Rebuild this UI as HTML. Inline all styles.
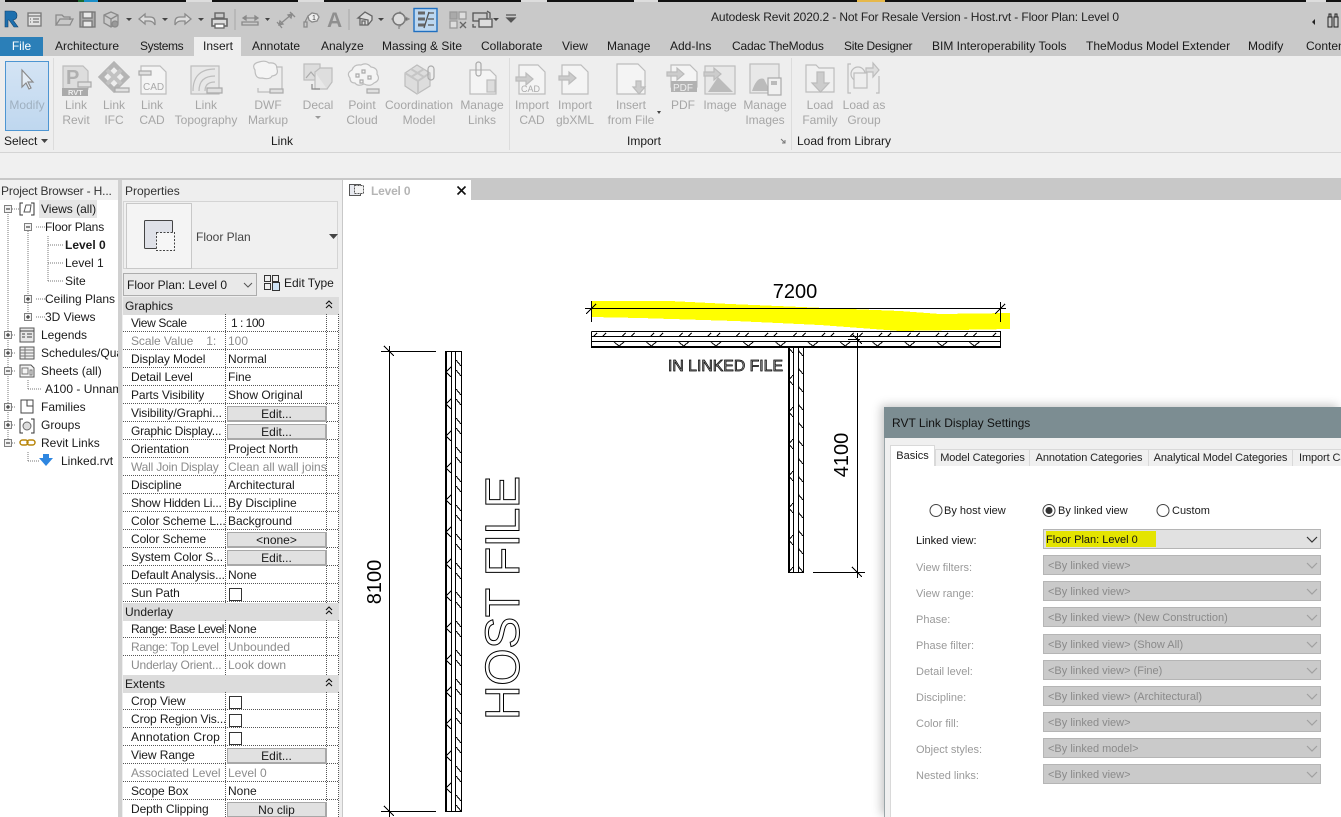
<!DOCTYPE html>
<html><head><meta charset="utf-8"><title>Revit</title>
<style>
html,body{margin:0;padding:0;width:1341px;height:817px;overflow:hidden;background:#fff}
body{position:relative;font:12px/16px "Liberation Sans",sans-serif;color:#1a1a1a}
.a,.t,.c,.g,.gc,.b,.bb,.v,.vg,.rk,.dl,.cb{position:absolute;white-space:nowrap}
.c,.gc{transform:translateX(-50%);text-align:center}
.g,.gc{color:#a6a6a6}
svg{position:absolute;overflow:visible}
.rk{left:131px;width:95px;overflow:hidden;letter-spacing:-.08px}
.v{left:228px;width:98px;overflow:hidden}
.grey{color:#8c8c8c}
.bb{left:227px;width:97px;height:13px;margin-top:1px;background:#e1e1e1;border:1px solid #a8a8a8;border-right-width:2px;border-bottom-width:2px;text-align:center;line-height:14px;box-sizing:content-box}
.ck{position:absolute;left:229px;width:11px;height:11px;margin-top:1px;border:1px solid #333;background:#fff}
.hd{position:absolute;left:123px;width:216px;height:18px;background:#dcdcdc;line-height:18px;text-indent:2px}
.dl{left:916px;color:#9a9a9a;font-size:11px;margin-top:1px}
.cb{left:1043px;width:276px;height:18px;background:#cacaca;border:1px solid #b5b5b5;color:#8a8a8a;line-height:21px;text-indent:4px;font-size:11px}
.tab{position:absolute;top:449px;height:16px;background:#f0f0f0;border:1px solid #d9d9d9;border-bottom:0;line-height:17px;text-align:center;font-size:11px;letter-spacing:-.1px;color:#222;box-sizing:content-box;white-space:nowrap;overflow:hidden}
</style></head><body>

<!-- top strip -->
<div class="a" style="left:0;top:0;width:1341px;height:2px;background:#111"></div>
<div class="a" style="left:0;top:0;width:5px;height:2px;background:#ccc"></div>
<div class="a" style="left:78px;top:0;width:6px;height:2px;background:#1a6a30"></div>
<div class="a" style="left:84px;top:0;width:14px;height:2px;background:#1a8fc8"></div>
<div class="a" style="left:186px;top:0;width:26px;height:2px;background:#ddd"></div>
<div class="a" style="left:298px;top:0;width:26px;height:2px;background:#ddd"></div>
<div class="a" style="left:521px;top:0;width:26px;height:2px;background:#ddd"></div>
<div class="a" style="left:634px;top:0;width:24px;height:2px;background:#ddd"></div>
<div class="a" style="left:857px;top:0;width:28px;height:2px;background:#e6b84a"></div>
<div class="a" style="left:1306px;top:0;width:20px;height:2px;background:#ddd"></div>

<!-- title bar -->
<div class="a" style="left:0;top:2px;width:1341px;height:34px;background:#c9c9c9"></div>
<div class="a" style="left:0;top:36px;width:1341px;height:20px;background:#c9c9c9"></div>
<div class="c" style="left:915px;top:9px;color:#222;font-size:12px;letter-spacing:-.13px">Autodesk Revit 2020.2 - Not For Resale Version - Host.rvt - Floor Plan: Level 0</div>

<!-- quick access -->
<svg style="left:0;top:0" width="540" height="36" viewBox="0 0 540 36" fill="none" stroke="#8a8a8a" stroke-width="1.3">
 <path d="M5 27V11h7q5 0 5 4.500q0 4-4 4.500l5 7h-4l-5-7h-1v7z" fill="#1d6fae" stroke="#12406a" stroke-width="0.6"/>
 <rect x="28" y="13" width="13" height="13" fill="#e2e2e2" stroke="#777"/><path d="M28 16h13M33 19h6M33 22h6M30 19h1M30 22h1" stroke="#777"/>
 <path d="M56 25V15h6l2 2h6v3M56 25h14l3-6H60l-4 6z"/>
 <rect x="80" y="12" width="15" height="15" fill="#aaa" stroke="#777"/><rect x="83" y="12" width="9" height="6" fill="#e8e8e8" stroke="#777"/><rect x="83" y="21" width="9" height="6" fill="#e8e8e8" stroke="#777"/>
 <path d="M104 15l7-3 7 3v8l-7 4-7-4zM104 15l7 4 7-4M111 19v8"/><circle cx="115" cy="24" r="3" fill="#999"/>
 <path d="M126 18h6l-3 3zM162 18h6l-3 3zM198 18h6l-3 3zM265 18h5l-2.500 3z" fill="#444" stroke="none"/>
 <path d="M139 19l6-5v3h5q5 0 5 5v3q-2-4-6-4h-4v3z" fill="#ddd"/>
 <path d="M191 19l-6-5v3h-5q-5 0-5 5v3q2-4 6-4h4v3z" fill="#ddd"/>
 <rect x="212" y="19" width="15" height="7" fill="#ddd" stroke="#666" stroke-width="1.600"/><rect x="215" y="13" width="9" height="5" stroke="#666" stroke-width="1.400"/><rect x="215" y="24" width="9" height="4" fill="#fff" stroke="#666"/>
 <path d="M235 9v21" stroke="#b0b0b0"/>
 <path d="M243 18h15M243 18l3-2v4zM258 18l-3-2v4zM242 22h16v3h-16z"/>
 <path d="M279 25l13-11M277 22l5 6M290 12l5 5M279 25l4-1-3-3zM292 14l-4 1 3 3z"/>
 <path d="M304 27v-5h3v5zM305 22l3-6"/><path d="M308 16l4-3 5 1 2 3-2 4-5 1-3-2z" fill="#eee"/><text x="312" y="20" font-size="7" fill="#444" stroke="none" font-family="Liberation Sans">1</text>
 <text x="327" y="27" font-family="Liberation Sans" font-weight="bold" font-size="21" fill="#8f8f8f" stroke="none">A</text>
 <path d="M349 9v21" stroke="#b0b0b0"/>
 <path d="M358 18l7-6 7 4v4l-4 5h-8v-7zM358 18l10 2v5M362 25v-4h3v4" fill="#ddd" stroke="#666"/>
 <path d="M378 18h6l-3 3zM493 18h6l-3 3z" fill="#444" stroke="none"/>
 <path d="M392 19l8-7 6 7-6 7z" fill="#ddd"/><circle cx="399" cy="19" r="6" fill="#ddd" stroke="#777" stroke-width="1.500"/><path d="M405 17l4 2-4 2zM399 25v4" fill="#555"/>
 <rect x="414" y="8.500" width="23" height="23" fill="#bcd7f0" stroke="#1f6fc0" stroke-width="1.400"/>
 <path d="M418 13h7M418 19h7M418 25h7" stroke="#666" stroke-width="3"/><path d="M428 13h6M428 19h6M428 25h6M429 12l-5 16" stroke="#555"/>
 <rect x="450" y="12" width="7" height="7" fill="#aaa" stroke="#999"/><rect x="459" y="12" width="7" height="7" fill="#ddd" stroke="#999"/><rect x="450" y="21" width="7" height="7" fill="#ddd" stroke="#999"/><path d="M460 22l6 6M466 22l-6 6" stroke="#666"/>
 <rect x="473" y="13" width="14" height="8" stroke="#555"/><rect x="479" y="19" width="13" height="8" fill="#ddd" stroke="#555"/><path d="M487 11l3 2v5M473 24v3h3" stroke="#555"/>
 <path d="M506 15h10M507 18h8l-4 4z" fill="#555" stroke="#555"/>
</svg>
<svg style="left:1300px;top:8px" width="41" height="22" fill="none" stroke="#222"><path d="M15 11l-3 3 3 3z" fill="#222" stroke="none"/><path d="M28 9h4v10h-4zM34 9h4v10h-4zM29 9V6h2v3M35 9V6h2v3"/></svg>

<!-- tabs -->
<div class="a" style="left:0;top:37px;width:43px;height:19px;background:#2b7fb8;color:#fff;text-align:center;line-height:19px">File</div>
<div class="a" style="left:194px;top:37px;width:47px;height:19px;background:#eeeeee"></div>
<div class="t" style="left:55px;top:38px">Architecture</div>
<div class="t" style="left:140px;top:38px;letter-spacing:-.4px">Systems</div>
<div class="t" style="left:203px;top:38px">Insert</div>
<div class="t" style="left:252px;top:38px">Annotate</div>
<div class="t" style="left:321px;top:38px">Analyze</div>
<div class="t" style="left:382px;top:38px">Massing &amp; Site</div>
<div class="t" style="left:481px;top:38px">Collaborate</div>
<div class="t" style="left:562px;top:38px">View</div>
<div class="t" style="left:607px;top:38px">Manage</div>
<div class="t" style="left:670px;top:38px">Add-Ins</div>
<div class="t" style="left:732px;top:38px;letter-spacing:-.2px">Cadac TheModus</div>
<div class="t" style="left:844px;top:38px;letter-spacing:-.3px">Site Designer</div>
<div class="t" style="left:932px;top:38px">BIM Interoperability Tools</div>
<div class="t" style="left:1086px;top:38px">TheModus Model Extender</div>
<div class="t" style="left:1248px;top:38px">Modify</div>
<div class="t" style="left:1306px;top:38px">Content</div>

<!-- ribbon -->
<div class="a" style="left:0;top:56px;width:1341px;height:96px;background:#eeeeee;border-bottom:1px solid #d4d4d4"></div>
<div class="a" style="left:0;top:153px;width:1341px;height:25px;background:#f0f0f0"></div>
<div class="a" style="left:0;top:178px;width:1341px;height:2px;background:#c8c8c8"></div>
<div class="a" style="left:5px;top:61px;width:42px;height:68px;background:linear-gradient(#d4e4f4,#bfd7ef);border:1px solid #4d95d2"></div>
<div class="a" style="left:53px;top:58px;width:1px;height:92px;background:#dcdcdc"></div>
<div class="a" style="left:509px;top:58px;width:1px;height:92px;background:#dcdcdc"></div>
<div class="a" style="left:791px;top:58px;width:1px;height:92px;background:#dcdcdc"></div>

<svg style="left:0;top:56px" width="900" height="60" fill="none" stroke="#bdbdbd" stroke-width="1.200">
 <path d="M22 14v17l4-4 3 6 2-1-3-6h5z" fill="#e4edf6" stroke="#8a8a8a"/>
 <path d="M63 10h20l5 5v18H63z" fill="#ddd"/><rect x="62" y="32" width="26" height="8" fill="#aaa" stroke="none"/><text x="66" y="28" font-family="Liberation Sans" font-weight="bold" font-size="20" fill="#b0b0b0" stroke="none">P</text><text x="68" y="39" font-family="Liberation Sans" font-weight="bold" font-size="7.500" fill="#eee" stroke="none">RVT</text>
 <path d="M78 26h13v5H78z" fill="#e0e0e0" stroke="#aaa"/>
 <path d="M101 21l13-13 13 13-13 13z" stroke="#b4b4b4" stroke-width="4.500"/><path d="M107 14l14 14M121 14l-14 14" stroke="#c2c2c2" stroke-width="4"/>
 <path d="M115 32h14v4h-14z" fill="#e0e0e0" stroke="#aaa"/>
 <path d="M141 10h19l6 6v22h-25z" fill="#f4f4f4"/><text x="143" y="34" font-family="Liberation Sans" font-size="10" fill="#aaa" stroke="none">CAD</text><path d="M139 15h12v4h-12z" fill="#e0e0e0" stroke="#aaa"/>
 <rect x="191" y="10" width="28" height="28" fill="#e8e8e8"/><path d="M193 35q0-22 22-22M199 35q0-15 16-15M205 35q0-9 10-9"/><path d="M207 32h15v5h-15z" fill="#e0e0e0" stroke="#aaa"/>
 <path d="M255 14q-4-6 4-8 6-2 10 1 8-1 8 6 2 6-5 7-2 4-10 2-7 1-7-8z" fill="#f4f4f4"/><path d="M276 11h6v25h-24v-4"/><path d="M270 33h13v4h-13z" fill="#e0e0e0" stroke="#aaa"/>
 <rect x="304" y="8" width="16" height="16" fill="#ddd"/><path d="M306 22l5-6 5 6" stroke="#aaa"/><path d="M315 16h12v17h-12z" fill="#e8e8e8"/><path d="M315 16l5-4h12v14l-5 7" fill="#dedede"/><path d="M312 28v5h8" stroke="#888"/>
 <path d="M350 22q-4-5 2-8 2-6 9-5 6-3 10 2 7 1 6 7 4 6-3 9-4 4-10 1-6 3-9-1-5 0-5-5z" fill="#f4f4f4"/><path d="M356 18h3v3h-3zM362 14h3v3h-3zM368 20h3v3h-3zM360 24h3v3h-3z" stroke="#aaa"/><path d="M367 33h12v4h-12z" fill="#e0e0e0" stroke="#aaa"/>
 <path d="M405 17l12-8 13 8v13l-13 8-12-8z" fill="#ddd"/><path d="M405 17l13 8 12-8M418 25v13M411 13l13 8M411 21l13-8" stroke="#c6c6c6" stroke-width="2"/><rect x="428" y="10" width="6" height="14" rx="3" stroke="#aaa"/>
 <path d="M470 14h20l6 6v18h-26z" fill="#f4f4f4"/><rect x="476" y="6" width="5" height="14" rx="2.500" stroke="#aaa"/><rect x="487" y="24" width="8" height="12" fill="#ddd"/>
 <path d="M519 9h19l7 7v22h-26z" fill="#f4f4f4"/><path d="M516 21h10v-4l7 6-7 6v-4h-10z" fill="#ccc" stroke="#bbb"/><text x="521" y="36" font-family="Liberation Sans" font-size="9" fill="#aaa" stroke="none">CAD</text>
 <path d="M562 9h19l7 7v22h-26z" fill="#f4f4f4"/><path d="M559 20h10v-4l7 6-7 6v-4h-10z" fill="#ccc" stroke="#bbb"/>
 <path d="M617 8h21l7 7v23h-28z" fill="#f4f4f4"/><path d="M636 25h5v6h4l-6 7-6-7h3z" fill="#ccc" stroke="#bbb"/>
 <path d="M671 9h19l7 7v15h-26z" fill="#f4f4f4"/><rect x="671" y="25" width="26" height="11" fill="#b2b2b2" stroke="none"/><text x="673" y="35" font-family="Liberation Sans" font-size="10" fill="#eee" stroke="none">PDF</text><path d="M667 16h10v-4l7 6-7 6v-4h-10z" fill="#ccc" stroke="#bbb"/>
 <rect x="705" y="10" width="30" height="28" fill="#e8e8e8"/><path d="M708 36l10-15 15 15z" fill="#bbb" stroke="none"/><path d="M704 16h10v-4l7 6-7 6v-4h-10z" fill="#ccc" stroke="#bbb"/>
 <rect x="750" y="8" width="29" height="29" fill="#e8e8e8"/><path d="M752 35q5-15 12-12l6 12z" fill="#bbb" stroke="none"/><rect x="768" y="22" width="13" height="17" fill="#f0f0f0" stroke="#aaa"/><rect x="771" y="25" width="6" height="4" fill="#bbb" stroke="none"/>
 <path d="M806 9h10l3 3h15v24h-28z" fill="#f0f0f0"/><path d="M817 16h7v11h5l-8.500 9-8.500-9h5z" fill="#ccc" stroke="#bbb"/>
 <path d="M851 8h-3v29h3M876 37h3V20"/><circle cx="858" cy="18" r="7" fill="#eee"/><rect x="854" y="17" width="13" height="15" fill="#eee"/><path d="M866 12h7V7l6 7-6 7v-5h-7z" fill="#ddd"/>
 <path d="M315 62h6l-3 3z" fill="#999" stroke="none" transform="translate(0,-2)"/>
</svg>

<div class="gc" style="left:27px;top:97px;color:#9fb0c0">Modify</div>
<div class="gc" style="left:76px;top:97px">Link</div><div class="gc" style="left:76px;top:112px">Revit</div>
<div class="gc" style="left:114px;top:97px">Link</div><div class="gc" style="left:114px;top:112px">IFC</div>
<div class="gc" style="left:152px;top:97px">Link</div><div class="gc" style="left:152px;top:112px">CAD</div>
<div class="gc" style="left:206px;top:97px">Link</div><div class="gc" style="left:206px;top:112px">Topography</div>
<div class="gc" style="left:268px;top:97px">DWF</div><div class="gc" style="left:268px;top:112px">Markup</div>
<div class="gc" style="left:318px;top:97px">Decal</div>
<div class="gc" style="left:362px;top:97px">Point</div><div class="gc" style="left:362px;top:112px">Cloud</div>
<div class="gc" style="left:419px;top:97px">Coordination</div><div class="gc" style="left:419px;top:112px">Model</div>
<div class="gc" style="left:482px;top:97px">Manage</div><div class="gc" style="left:482px;top:112px">Links</div>
<div class="gc" style="left:532px;top:97px">Import</div><div class="gc" style="left:532px;top:112px">CAD</div>
<div class="gc" style="left:575px;top:97px">Import</div><div class="gc" style="left:575px;top:112px">gbXML</div>
<div class="gc" style="left:631px;top:97px">Insert</div><div class="gc" style="left:631px;top:112px">from File</div>
<div class="gc" style="left:683px;top:97px">PDF</div>
<div class="gc" style="left:720px;top:97px">Image</div>
<div class="gc" style="left:765px;top:97px">Manage</div><div class="gc" style="left:765px;top:112px">Images</div>
<div class="gc" style="left:820px;top:97px">Load</div><div class="gc" style="left:820px;top:112px">Family</div>
<div class="gc" style="left:864px;top:97px">Load as</div><div class="gc" style="left:864px;top:112px">Group</div>

<div class="t" style="left:4px;top:133px">Select</div>
<div class="c" style="left:282px;top:133px">Link</div>
<div class="c" style="left:644px;top:133px">Import</div>
<div class="t" style="left:797px;top:133px">Load from Library</div>
<svg style="left:0;top:130px" width="800" height="20"><path d="M41 9h7l-3.500 4zM657 -19h4l-2 3z" fill="#444"/><path d="M781 9l4 4M785 10v3h-3" stroke="#777" fill="none"/></svg>

<!-- project browser -->
<div class="a" style="left:0;top:180px;width:118px;height:20px;background:#f0f0f0"></div>
<div class="t" style="left:1px;top:183px;color:#333;letter-spacing:-.15px">Project Browser - H...</div>
<div class="a" style="left:118px;top:180px;width:4px;height:637px;background:#d0d0d0"></div>
<div class="a" style="left:39px;top:200px;width:58px;height:18px;background:#e5e5e5"></div>
<svg style="left:0;top:200px" width="118" height="280" fill="none">
 <g stroke="#777" stroke-dasharray="1 1">
  <path d="M8 14V243M8 9h12M28 27V117M28 27h0M36 27h10M48 36V81M48 45h16M48 63h16M48 81h16M36 99h10M36 117h10M8 135h8M8 153h8M8 171h8M28 180V189M28 189h14M8 207h8M8 225h8M8 243h8M28 252V261M28 261h12"/>
 </g>
 <g fill="#f2f2f2" stroke="#808080">
  <rect x="4.500" y="5.500" width="7" height="7"/><rect x="24.500" y="23.500" width="7" height="7"/><rect x="24.500" y="95.500" width="7" height="7"/><rect x="24.500" y="113.500" width="7" height="7"/><rect x="4.500" y="131.500" width="7" height="7"/><rect x="4.500" y="149.500" width="7" height="7"/><rect x="4.500" y="167.500" width="7" height="7"/><rect x="4.500" y="203.500" width="7" height="7"/><rect x="4.500" y="221.500" width="7" height="7"/><rect x="4.500" y="239.500" width="7" height="7"/>
 </g>
 <path d="M6 9h4M26 27h4M26 99h4M28 97v4M26 117h4M28 115v4M6 135h4M8 133v4M6 153h4M8 151v4M6 171h4M6 207h4M8 205v4M6 225h4M8 223v4M6 243h4" stroke="#222"/>
 <path d="M23 3h-3v12h3M31 3h3v12h-3" stroke="#333"/><path d="M24 12l2-7h5l-1 7z" stroke="#555"/>
 <rect x="20" y="128" width="14" height="14" fill="#e8e8e8" stroke="#555"/><path d="M20 131h14M22 134h3M22 137h3M27 134h5M27 137h5" stroke="#444"/>
 <rect x="20" y="147" width="14" height="12" fill="#eee" stroke="#555"/><path d="M20 150h14M20 153h14M20 156h14M25 147v12" stroke="#777"/>
 <path d="M20 165h11l3 3v9H20z" fill="#f4f4f4" stroke="#555"/><path d="M22 168h6v6h-6zM30 170h2v5h-2z" stroke="#777"/>
 <path d="M21 200h6v6h6v7H21zM27 200h6v6" stroke="#444"/>
 <path d="M23 219h-3v14h3M31 219h3v14h-3" stroke="#333"/><circle cx="27" cy="226" r="4" fill="#ddd" stroke="#666"/>
 <rect x="20" y="240" width="8" height="5" rx="2.500" stroke="#b8860b" stroke-width="1.500"/><rect x="27" y="240" width="8" height="5" rx="2.500" stroke="#b8860b" stroke-width="1.500"/>
 <path d="M43 254h6v4h4l-7 8-7-8h4z" fill="#2e86e0"/>
</svg>
<div class="t" style="left:41px;top:201px">Views (all)</div>
<div class="t" style="left:45px;top:219px;letter-spacing:-.15px">Floor Plans</div>
<div class="t" style="left:65px;top:237px;font-weight:bold">Level 0</div>
<div class="t" style="left:65px;top:255px">Level 1</div>
<div class="t" style="left:65px;top:273px">Site</div>
<div class="t" style="left:45px;top:291px">Ceiling Plans</div>
<div class="t" style="left:45px;top:309px">3D Views</div>
<div class="t" style="left:41px;top:327px">Legends</div>
<div class="a" style="left:41px;top:345px;width:77px;overflow:hidden">Schedules/Quantities</div>
<div class="t" style="left:41px;top:363px">Sheets (all)</div>
<div class="a" style="left:45px;top:381px;width:73px;overflow:hidden;white-space:nowrap">A100 - Unnamed</div>
<div class="t" style="left:41px;top:399px">Families</div>
<div class="t" style="left:41px;top:417px">Groups</div>
<div class="t" style="left:41px;top:435px">Revit Links</div>
<div class="t" style="left:61px;top:453px">Linked.rvt</div>

<!-- properties -->
<div class="a" style="left:122px;top:180px;width:221px;height:637px;background:#eeeeee"></div>
<div class="a" style="left:123px;top:314px;width:216px;height:503px;background:#fff"></div>
<div class="t" style="left:125px;top:183px;color:#333">Properties</div>
<div class="a" style="left:123px;top:201px;width:215px;height:68px;background:#f0f0f0;border:1px solid #d4d4d4;box-sizing:border-box"></div>
<div class="a" style="left:126px;top:203px;width:66px;height:66px;background:#f4f4f4;border:1px solid #c8c8c8;box-sizing:border-box"></div>
<svg style="left:140px;top:218px" width="40" height="36"><rect x="4.500" y="2.500" width="28" height="28" rx="1" fill="#dfe1e8" stroke="#444"/><rect x="16.500" y="14.500" width="18" height="18" fill="#f6f6f6" stroke="#444" stroke-dasharray="2 1.500"/></svg>
<div class="t" style="left:196px;top:229px;color:#444">Floor Plan</div>
<svg style="left:328px;top:233px" width="12" height="8"><path d="M1 1h9l-4.500 5z" fill="#444"/></svg>
<div class="a" style="left:123px;top:273px;width:134px;height:23px;background:#e9e9e9;border:1px solid #adadad;box-sizing:border-box;line-height:23px;text-indent:3px">Floor Plan: Level 0</div>
<svg style="left:243px;top:282px" width="12" height="8"><path d="M1 1l4 4 4-4" stroke="#555" fill="none"/></svg>
<svg style="left:263px;top:274px" width="18" height="18" fill="none" stroke="#333"><rect x="1.500" y="1.500" width="6" height="6"/><rect x="9.500" y="1.500" width="6" height="6"/><rect x="1.500" y="9.500" width="6" height="6"/><rect x="9.500" y="8.500" width="7" height="8" fill="#cfe3f5"/></svg>
<div class="t" style="left:284px;top:275px">Edit Type</div>

<div class="hd" style="top:297px">Graphics</div>
<div class="hd" style="top:603px">Underlay</div>
<div class="hd" style="top:675px">Extents</div>
<svg style="left:324px;top:298px" width="12" height="420" fill="none" stroke="#111" stroke-width="1.100"><path d="M2 6l3-3 3 3M2 10l3-3 3 3M2 312l3-3 3 3M2 316l3-3 3 3M2 384l3-3 3 3M2 388l3-3 3 3"/></svg>

<!-- property grid lines -->
<svg style="left:123px;top:314px" width="216" height="503" fill="none" stroke="#555" stroke-width="1" stroke-dasharray="1 1">
 <path d="M0 17.500H216M0 35.500H216M0 53.500H216M0 71.500H216M0 89.500H216M0 107.500H216M0 125.500H216M0 143.500H216M0 161.500H216M0 179.500H216M0 197.500H216M0 215.500H216M0 233.500H216M0 251.500H216M0 269.500H216M0 287.500H216M0 323.500H216M0 341.500H216M0 395.500H216M0 413.500H216M0 431.500H216M0 449.500H216M0 467.500H216M0 485.500H216"/>
 <path d="M102.500 0V289M102.500 306V361M102.500 378V503M203.500 0V289M203.500 306V361M203.500 378V503M215.500 0V289M215.500 306V361M215.500 378V503"/>
</svg>

<div class="rk" style="top:315px;letter-spacing:-.35px">View Scale</div><div class="v" style="top:315px;left:231px;letter-spacing:-.5px">1 : 100</div>
<div class="rk grey" style="top:333px">Scale Value &nbsp;&nbsp;&nbsp;1:</div><div class="v grey" style="top:333px">100</div>
<div class="rk" style="top:351px">Display Model</div><div class="v" style="top:351px">Normal</div>
<div class="rk" style="top:369px">Detail Level</div><div class="v" style="top:369px">Fine</div>
<div class="rk" style="top:387px">Parts Visibility</div><div class="v" style="top:387px">Show Original</div>
<div class="rk" style="top:405px">Visibility/Graphi...</div><div class="bb" style="top:405px">Edit...</div>
<div class="rk" style="top:423px;letter-spacing:-.2px">Graphic Display...</div><div class="bb" style="top:423px">Edit...</div>
<div class="rk" style="top:441px">Orientation</div><div class="v" style="top:441px">Project North</div>
<div class="rk grey" style="top:459px;letter-spacing:-.2px">Wall Join Display</div><div class="v grey" style="top:459px">Clean all wall joins</div>
<div class="rk" style="top:477px">Discipline</div><div class="v" style="top:477px">Architectural</div>
<div class="rk" style="top:495px;letter-spacing:-.2px">Show Hidden Li...</div><div class="v" style="top:495px">By Discipline</div>
<div class="rk" style="top:513px">Color Scheme L...</div><div class="v" style="top:513px">Background</div>
<div class="rk" style="top:531px">Color Scheme</div><div class="bb" style="top:531px">&lt;none&gt;</div>
<div class="rk" style="top:549px">System Color S...</div><div class="bb" style="top:549px">Edit...</div>
<div class="rk" style="top:567px">Default Analysis...</div><div class="v" style="top:567px">None</div>
<div class="rk" style="top:585px">Sun Path</div><div class="ck" style="top:587px"></div>
<div class="rk" style="top:621px;letter-spacing:-.5px">Range: Base Level</div><div class="v" style="top:621px">None</div>
<div class="rk grey" style="top:639px;letter-spacing:-.35px">Range: Top Level</div><div class="v grey" style="top:639px">Unbounded</div>
<div class="rk grey" style="top:657px;letter-spacing:-.2px">Underlay Orient...</div><div class="v grey" style="top:657px">Look down</div>
<div class="rk" style="top:693px">Crop View</div><div class="ck" style="top:695px"></div>
<div class="rk" style="top:711px;letter-spacing:-.1px">Crop Region Vis...</div><div class="ck" style="top:713px"></div>
<div class="rk" style="top:729px;letter-spacing:.15px">Annotation Crop</div><div class="ck" style="top:731px"></div>
<div class="rk" style="top:747px">View Range</div><div class="bb" style="top:747px">Edit...</div>
<div class="rk grey" style="top:765px">Associated Level</div><div class="v grey" style="top:765px">Level 0</div>
<div class="rk" style="top:783px">Scope Box</div><div class="v" style="top:783px">None</div>
<div class="rk" style="top:801px">Depth Clipping</div><div class="bb" style="top:801px">No clip</div>

<!-- view tab -->
<div class="a" style="left:342px;top:180px;width:999px;height:20px;background:#c8c8c8"></div>
<div class="a" style="left:342px;top:180px;width:1px;height:637px;background:#c8c8c8"></div>
<div class="a" style="left:343px;top:180px;width:128px;height:20px;background:#fff"></div>
<svg style="left:348px;top:182px" width="20" height="16" fill="none" stroke="#555"><rect x="1.500" y="2.500" width="11" height="11" fill="#e8eaf0"/><rect x="6.500" y="3.500" width="9" height="8" fill="#f4f4f4" stroke-dasharray="2 1"/></svg>
<div class="t" style="left:371px;top:183px;color:#b5b5b5;font-weight:bold;letter-spacing:-.2px">Level 0</div>
<svg style="left:456px;top:185px" width="12" height="12"><path d="M1.500 1.500l8 8M9.500 1.500l-8 8" stroke="#111" stroke-width="1.600"/></svg>

<!-- drawing -->
<svg style="left:0;top:0" width="1341" height="817" fill="none" stroke="#000" stroke-width="1" shape-rendering="crispEdges">
 <defs>
  <pattern id="hTop" x="591" y="332" width="28.500" height="5" patternUnits="userSpaceOnUse"><path d="M2 5l4-4M11 5l4-4" stroke="#000"/></pattern>
  <pattern id="hBot" x="593" y="342" width="32.300" height="5" patternUnits="userSpaceOnUse"><path d="M21 0l5 4 5-4" stroke="#000"/></pattern>
  <pattern id="tL" x="789" y="371" width="5" height="32" patternUnits="userSpaceOnUse"><path d="M4 4L0 9l4 5" stroke="#000"/></pattern>
  <pattern id="tR" x="798" y="347" width="6" height="18" patternUnits="userSpaceOnUse"><path d="M0 3l5 6" stroke="#000"/></pattern>
  <pattern id="lL" x="446" y="351" width="6" height="32" patternUnits="userSpaceOnUse"><path d="M5 16L0 21l5 5" stroke="#000"/></pattern>
  <pattern id="lR" x="456" y="351" width="6" height="29" patternUnits="userSpaceOnUse"><path d="M0 9l5 6M0 19l5 6" stroke="#000"/></pattern>
 </defs>

 <!-- yellow -->
 <path d="M591 301L670 301 730 304 825 308 900 311 940 314 1010 313V329L900 331 820 325 735 321 640 318 591 317z" fill="#ffff00" stroke="none"/>

 <!-- top dim -->
 <path d="M585 308.500H1006M591.500 301V322M1000.500 302V322M586 314l10-10M995 314l10-10"/>
 <!-- top wall -->
 <rect x="592" y="332" width="408" height="5" fill="url(#hTop)" stroke="none"/>
 <rect x="592" y="342" width="408" height="4" fill="url(#hBot)" stroke="none"/>
 <path d="M591.500 331.500H1000.500V346M591.500 331.500V346M591 336.500H1001M591 341.500H1001"/>
 <rect x="591" y="346" width="410" height="2" fill="#000" stroke="none"/>
 <!-- T wall -->
 <rect x="788" y="347" width="2" height="226" fill="#000" stroke="none"/>
 <path d="M793.500 347V572M798.500 347V572M803.500 347V572M788 572.500H804"/>
 <rect x="789" y="348" width="5" height="224" fill="url(#tL)" stroke="none"/>
 <rect x="798" y="348" width="6" height="224" fill="url(#tR)" stroke="none"/>
 <!-- 4100 dim -->
 <path d="M857.500 333V578M848 339.500H860M813 572.500H865M852 334l10 10M852 567l10 10"/>

 <!-- left wall -->
 <rect x="445" y="351" width="2" height="461" fill="#000" stroke="none"/>
 <path d="M445 351.500H461.500V811.500H445M451.500 351V812M455.500 351V812"/>
 <rect x="446" y="352" width="6" height="459" fill="url(#lL)" stroke="none"/>
 <rect x="456" y="352" width="6" height="459" fill="url(#lR)" stroke="none"/>
 <!-- 8100 dim -->
 <path d="M389.500 346V817M381 351.500H436M381 811.500H436M384 346l10 10M384 806l10 10"/>
</svg>

<svg style="left:0;top:0" width="1341" height="817" font-family="Liberation Sans">
 <text x="795" y="298" font-size="20" text-anchor="middle" fill="#000">7200</text>
 <text transform="translate(848,455) rotate(-90)" font-size="20" text-anchor="middle" fill="#000">4100</text>
 <text transform="translate(381,582) rotate(-90)" font-size="20" text-anchor="middle" fill="#000">8100</text>
 <text x="668" y="371" font-size="15.500" textLength="115" lengthAdjust="spacingAndGlyphs" fill="#999" stroke="#000" stroke-width="0.700">IN LINKED FILE</text>
 <text transform="translate(519,720) rotate(-90)" font-size="48" textLength="244" lengthAdjust="spacing" fill="#fff" stroke="#000" stroke-width="1">HOST FILE</text>
</svg>

<!-- dialog -->
<div class="a" style="left:884px;top:407px;width:457px;height:410px;background:#f0f0f0;box-shadow:-3px -2px 9px rgba(0,0,0,.22);border-left:1px solid #9aa5a8;box-sizing:border-box"></div>
<div class="a" style="left:884px;top:407px;width:457px;height:31px;background:#7c8d92"></div>
<div class="t" style="left:892px;top:415px;color:#111">RVT Link Display Settings</div>
<div class="a" style="left:890px;top:465px;width:451px;height:352px;background:#fff;border-left:1px solid #d9d9d9;border-top:1px solid #d9d9d9;box-sizing:border-box"></div>
<div class="tab" style="left:935px;width:93px">Model Categories</div>
<div class="tab" style="left:1029px;width:118px">Annotation Categories</div>
<div class="tab" style="left:1148px;width:143px">Analytical Model Categories</div>
<div class="tab" style="left:1292px;width:60px;text-align:left;text-indent:6px">Import Categories</div>
<div class="a" style="left:890px;top:445px;width:45px;height:21px;background:#fff;border:1px solid #d9d9d9;border-bottom:0;box-sizing:border-box;text-align:center;line-height:20px;font-size:11px">Basics</div>

<svg style="left:925px;top:500px" width="260" height="20" fill="#fff" stroke="#444"><circle cx="11" cy="10.500" r="6"/><circle cx="124" cy="10.500" r="6"/><circle cx="124" cy="10.500" r="3.500" fill="#333" stroke="none"/><circle cx="238" cy="10.500" r="6"/></svg>
<div class="t" style="left:944px;top:503px;font-size:11px">By host view</div>
<div class="t" style="left:1058px;top:503px;font-size:11px">By linked view</div>
<div class="t" style="left:1172px;top:503px;font-size:11px">Custom</div>

<div class="t" style="left:916px;top:533px;font-size:11px;color:#111">Linked view:</div>
<div class="cb" style="top:529px;background:#e1e1e1;color:#111">Floor Plan: Level 0</div>
<div class="a" style="left:1046px;top:531px;width:110px;height:16px;background:#e4e400;line-height:18px;font-size:11px;color:#111">Floor Plan: Level 0</div>

<div class="dl" style="top:559px">View filters:</div><div class="cb" style="top:555px">&lt;By linked view&gt;</div>
<div class="dl" style="top:585px">View range:</div><div class="cb" style="top:581px">&lt;By linked view&gt;</div>
<div class="dl" style="top:611px">Phase:</div><div class="cb" style="top:607px">&lt;By linked view&gt; (New Construction)</div>
<div class="dl" style="top:637px">Phase filter:</div><div class="cb" style="top:634px">&lt;By linked view&gt; (Show All)</div>
<div class="dl" style="top:663px">Detail level:</div><div class="cb" style="top:660px">&lt;By linked view&gt; (Fine)</div>
<div class="dl" style="top:689px">Discipline:</div><div class="cb" style="top:686px">&lt;By linked view&gt; (Architectural)</div>
<div class="dl" style="top:715px">Color fill:</div><div class="cb" style="top:712px">&lt;By linked view&gt;</div>
<div class="dl" style="top:741px">Object styles:</div><div class="cb" style="top:738px">&lt;By linked model&gt;</div>
<div class="dl" style="top:767px">Nested links:</div><div class="cb" style="top:764px">&lt;By linked view&gt;</div>

<svg style="left:1305px;top:525px" width="16" height="260" fill="none" stroke="#a0a0a0" stroke-width="1.200">
 <path d="M2 12l5 5 5-5" stroke="#333"/>
 <path d="M2 38l5 5 5-5M2 64l5 5 5-5M2 90l5 5 5-5M2 117l5 5 5-5M2 143l5 5 5-5M2 169l5 5 5-5M2 195l5 5 5-5M2 221l5 5 5-5M2 247l5 5 5-5"/>
</svg>

</body></html>
